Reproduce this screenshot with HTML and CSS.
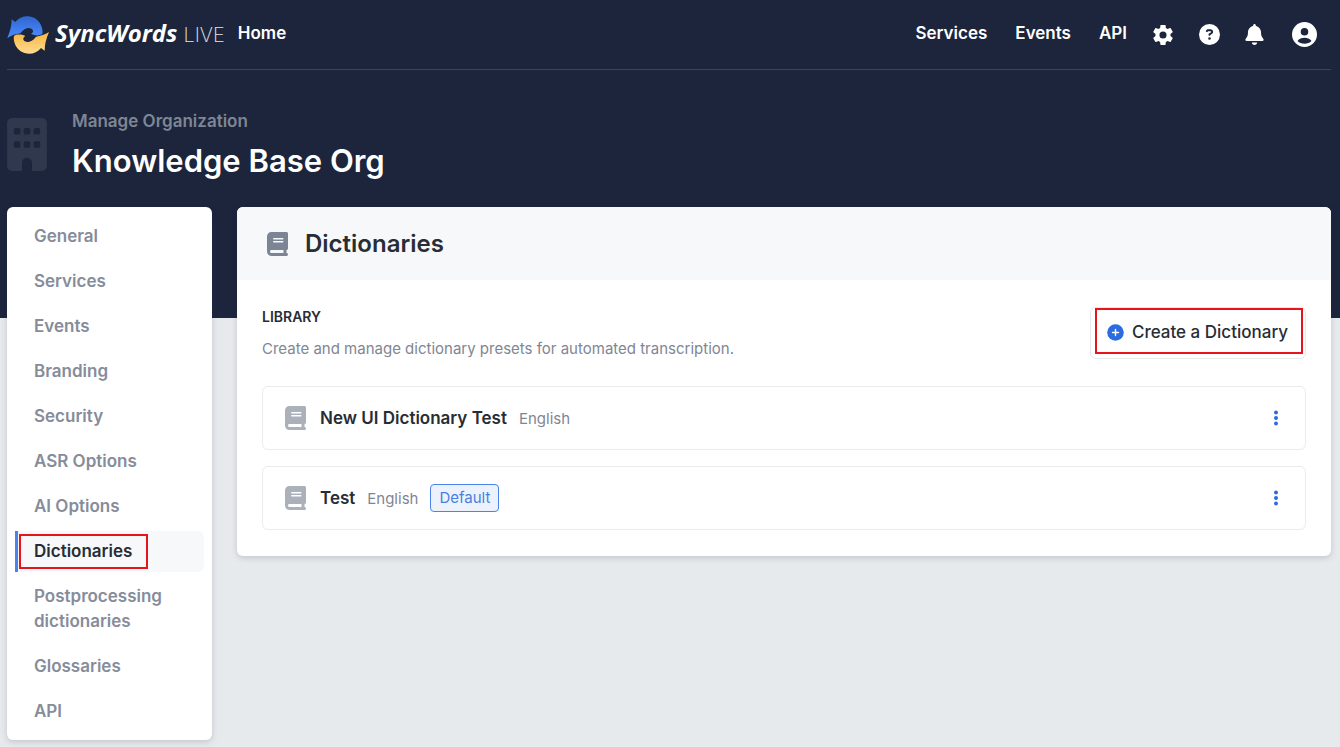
FILE: index.html
```html
<!DOCTYPE html>
<html lang="en">
<head>
<meta charset="utf-8">
<title>Dictionaries - SyncWords Live</title>
<meta name="viewport" content="width=device-width, initial-scale=1">
<link rel="stylesheet" href="styles.css">
</head>
<body>
<svg class="sprite" aria-hidden="true">
  <defs>
    <symbol id="book" viewBox="0 0 448 512"><path d="M96 0C43 0 0 43 0 96V416c0 53 43 96 96 96H384h32c17.7 0 32-14.3 32-32s-14.3-32-32-32V384c17.7 0 32-14.3 32-32V32c0-17.7-14.3-32-32-32H384 96zm0 384H352v64H96c-17.7 0-32-14.3-32-32s14.3-32 32-32zm32-240c0-8.8 7.2-16 16-16H336c8.8 0 16 7.2 16 16s-7.2 16-16 16H144c-8.8 0-16-7.2-16-16zm16 48H336c8.8 0 16 7.2 16 16s-7.2 16-16 16H144c-8.8 0-16-7.2-16-16s7.2-16 16-16z"/></symbol>
    <symbol id="dots" viewBox="0 0 6 16"><circle cx="3" cy="2.5" r="2"/><circle cx="3" cy="8" r="2"/><circle cx="3" cy="13.5" r="2"/></symbol>
  </defs>
</svg>

<div class="hero">
  <header class="topbar">
    <a class="brand" href="#" aria-label="SyncWords Live">
      <svg class="brand-mark" viewBox="11 12 126 120" aria-hidden="true">
        <defs>
          <linearGradient id="blue" x1="0" y1="0" x2="0" y2="1"><stop offset="0" stop-color="#2f66d0"/><stop offset="1" stop-color="#4b8bff"/></linearGradient>
          <linearGradient id="gold" x1="0" y1="1" x2="0" y2="0"><stop offset="0" stop-color="#f6b43e"/><stop offset="1" stop-color="#ffdc92"/></linearGradient>
          <path id="arrow" d="M25 25L36 33C54 9 92 10 109 35C117 47 119 60 117 69C108 75 96 74 83 69C92 63 90 56 84 53C76 48 62 52 51 67C38 69 24 73 12 81C20 62 25 45 25 25Z"/>
        </defs>
        <use href="#arrow" fill="url(#blue)"/>
        <use href="#arrow" fill="url(#gold)" transform="rotate(180 74.500 72)"/>
      </svg>
      <span class="brand-name">SyncWords</span>
      <span class="brand-live">LIVE</span>
    </a>
    <a class="top-link" href="#">Home</a>
    <nav class="top-nav" aria-label="Main">
      <a class="top-link" href="#">Services</a>
      <a class="top-link" href="#">Events</a>
      <a class="top-link" href="#">API</a>
    </nav>
    <div class="top-icons">
      <button class="icon-button" type="button" aria-label="Settings"><svg width="22" height="22" viewBox="1.5 1.5 21 21"><path d="M19.14 12.94c.04-.3.06-.61.06-.94 0-.32-.02-.64-.07-.94l2.03-1.58c.18-.14.23-.41.12-.61l-1.92-3.32c-.12-.22-.37-.29-.59-.22l-2.39.96c-.5-.38-1.03-.7-1.62-.94l-.36-2.54c-.04-.24-.24-.41-.48-.41h-3.84c-.24 0-.43.17-.47.41l-.36 2.54c-.59.24-1.13.57-1.62.94l-2.39-.96c-.22-.08-.47 0-.59.22L2.74 8.87c-.12.21-.08.47.12.61l2.03 1.58c-.05.3-.09.63-.09.94s.02.64.07.94l-2.03 1.58c-.18.14-.23.41-.12.61l1.92 3.32c.12.22.37.29.59.22l2.39-.96c.5.38 1.03.7 1.62.94l.36 2.54c.05.24.24.41.48.41h3.84c.24 0 .44-.17.47-.41l.36-2.54c.59-.24 1.13-.56 1.62-.94l2.39.96c.22.08.47 0 .59-.22l1.92-3.32c.12-.22.07-.47-.12-.61zM12 15.4A3.4 3.4 0 1 1 12 8.6a3.4 3.4 0 0 1 0 6.8z"/></svg></button>
      <button class="icon-button" type="button" aria-label="Help"><svg width="21" height="21" viewBox="0 0 512 512"><path d="M256 512A256 256 0 1 0 256 0a256 256 0 1 0 0 512zM169.8 165.3c7.9-22.3 29.1-37.3 52.8-37.3h58.3c34.9 0 63.1 28.3 63.1 63.1c0 22.6-12.1 43.5-31.7 54.8L280 264.4c-.2 13-10.9 23.6-24 23.6c-13.3 0-24-10.7-24-24V250.5c0-8.6 4.6-16.5 12.1-20.8l44.3-25.4c4.7-2.7 7.6-7.7 7.6-13.1c0-8.4-6.8-15.1-15.1-15.1H222.6c-3.4 0-6.4 2.1-7.5 5.3l-.4 1.2c-4.4 12.5-18.2 19-30.6 14.6s-19-18.2-14.6-30.6l.4-1.2zM224 352a32 32 0 1 1 64 0 32 32 0 1 1 -64 0z"/></svg></button>
      <button class="icon-button" type="button" aria-label="Notifications"><svg width="19" height="21" viewBox="0 0 448 512"><path d="M224 0c-17.7 0-32 14.3-32 32V51.2C119 66 64 130.6 64 208v18.8c0 47-17.3 92.4-48.5 127.6l-7.4 8.3c-8.4 9.4-10.4 22.9-5.3 34.4S19.4 416 32 416H416c12.6 0 24-7.4 29.2-18.9s3.1-25-5.3-34.4l-7.4-8.3C401.3 319.2 384 273.9 384 226.8V208c0-77.4-55-142-128-156.8V32c0-17.7-14.3-32-32-32zm45.3 493.3c12-12 18.7-28.3 18.7-45.3H224 160c0 17 6.7 33.3 18.7 45.3s28.3 18.7 45.3 18.7s33.3-6.7 45.3-18.7z"/></svg></button>
      <button class="icon-button account" type="button" aria-label="Account"><svg width="25" height="25" viewBox="0 0 25 25"><path fill-rule="evenodd" d="M12.500 0a12.500 12.500 0 1 0 0 25a12.500 12.500 0 1 0 0-25zM12.500 6a3.800 3.800 0 1 1 0 7.600a3.800 3.800 0 1 1 0-7.600zM5.500 19C7 16.800 9.800 15.800 12.500 15.800S18 16.800 19.500 19C17.800 20.900 15.300 21.700 12.500 21.700S7.200 20.900 5.500 19z"/></svg></button>
    </div>
  </header>
  <div class="org">
    <svg class="org-icon" viewBox="0 0 384 512" aria-hidden="true"><path fill-rule="evenodd" d="M48 0C21.500 0 0 21.500 0 48V464c0 26.500 21.500 48 48 48h96V432c0-26.500 21.500-48 48-48s48 21.500 48 48v80h96c26.500 0 48-21.500 48-48V48c0-26.500-21.500-48-48-48zM80 96h32q16 0 16 16v32q0 16-16 16H80q-16 0-16-16v-32q0-16 16-16zM176 96h32q16 0 16 16v32q0 16-16 16h-32q-16 0-16-16v-32q0-16 16-16zM272 96h32q16 0 16 16v32q0 16-16 16h-32q-16 0-16-16v-32q0-16 16-16zM80 224h32q16 0 16 16v32q0 16-16 16H80q-16 0-16-16v-32q0-16 16-16zM176 224h32q16 0 16 16v32q0 16-16 16h-32q-16 0-16-16v-32q0-16 16-16zM272 224h32q16 0 16 16v32q0 16-16 16h-32q-16 0-16-16v-32q0-16 16-16z"/></svg>
    <div>
      <p class="org-label">Manage Organization</p>
      <h1 class="org-name">Knowledge Base Org</h1>
    </div>
  </div>
</div>

<div class="page">
  <nav class="sidebar" aria-label="Organization settings">
    <a class="side-link" href="#">General</a>
    <a class="side-link" href="#">Services</a>
    <a class="side-link" href="#">Events</a>
    <a class="side-link" href="#">Branding</a>
    <a class="side-link" href="#">Security</a>
    <a class="side-link" href="#">ASR Options</a>
    <a class="side-link" href="#">AI Options</a>
    <a class="side-link active" href="#" aria-current="page">Dictionaries<span class="callout callout-side"></span></a>
    <a class="side-link" href="#">Postprocessing dictionaries</a>
    <a class="side-link" href="#">Glossaries</a>
    <a class="side-link" href="#">API</a>
  </nav>

  <main class="panel">
    <div class="panel-head">
      <svg class="book" aria-hidden="true"><use href="#book"/></svg>
      <h2 class="panel-title">Dictionaries</h2>
    </div>
    <div class="panel-body">
      <div class="library">
        <div>
          <h3 class="library-title">LIBRARY</h3>
          <p class="library-text">Create and manage dictionary presets for automated transcription.</p>
        </div>
        <button class="create" type="button">
          <svg width="17" height="17" viewBox="0 0 17 17" aria-hidden="true"><circle cx="8.500" cy="8.500" r="8.300" fill="#2c6be0"/><path d="M8.500 5.500v6M5.500 8.500h6" stroke="#fff" stroke-width="1.400" stroke-linecap="round"/></svg>
          Create a Dictionary
          <span class="callout callout-create"></span>
        </button>
      </div>
      <ul class="list">
        <li class="row">
          <svg class="book" aria-hidden="true"><use href="#book"/></svg>
          <span class="row-name">New UI Dictionary Test</span>
          <span class="row-lang">English</span>
          <button class="more" type="button" aria-label="More options"><svg width="6" height="16"><use href="#dots"/></svg></button>
        </li>
        <li class="row">
          <svg class="book" aria-hidden="true"><use href="#book"/></svg>
          <span class="row-name">Test</span>
          <span class="row-lang">English</span>
          <span class="tag">Default</span>
          <button class="more" type="button" aria-label="More options"><svg width="6" height="16"><use href="#dots"/></svg></button>
        </li>
      </ul>
    </div>
  </main>
</div>
</body>
</html>
```
FILE: styles.css
```css
* { box-sizing: border-box; }

body {
  margin: 0;
  background: #e7eaed;
  color: #282d35;
  font-family: Inter, "Liberation Sans", sans-serif;
  font-size: 17px;
}

h1, h2, h3, p, ul { margin: 0; padding: 0; }
a { color: inherit; text-decoration: none; }
button { border: 0; background: none; padding: 0; font: inherit; color: inherit; }
svg { display: block; flex: none; fill: currentColor; }
.sprite { position: absolute; width: 0; height: 0; }

.hero {
  padding: 0 9px 111px 7px;
  background: #1c253c;
  color: #fff;
}

.topbar {
  display: flex;
  align-items: center;
  height: 70px;
  padding-right: 14px;
  border-bottom: 1px solid #3b455b;
}

.brand { display: flex; align-items: center; gap: 6px; margin-right: 13px; }
.brand-mark { width: 42px; height: 40px; }
.brand-name { padding-bottom: 3px; font: italic 700 24px/32px "Open Sans", "Noto Sans", sans-serif; }
.brand-live { font: 200 20px/32px Inter, sans-serif; color: #e2e5ec; }
.top-link { font-weight: 600; line-height: 24px; padding-bottom: 3px; }
.top-nav { display: flex; gap: 28px; margin-left: auto; }
.top-icons { display: flex; align-items: center; gap: 25px; margin-left: 25px; }
.icon-button { display: flex; }
.account { margin-left: 3px; }

.org { display: flex; align-items: center; gap: 25px; padding: 35px 0 23px; }
.org-icon { width: 40px; height: 53px; color: #30384d; }
.org-label { color: #7f8694; font-weight: 600; line-height: 32px; }
.org-name { font-size: 31px; font-weight: 600; line-height: 47px; }

.page {
  display: flex;
  align-items: flex-start;
  gap: 25px;
  margin-top: -111px;
  padding: 0 9px 7px 7px;
}

.sidebar, .panel {
  border-radius: 6px;
  background: #fff;
  box-shadow: 0 2px 6px rgba(30, 40, 60, .18);
}

.sidebar {
  display: flex;
  flex: none;
  flex-direction: column;
  gap: 4px;
  width: 205px;
  padding: 9px 8px 8px;
}

.side-link {
  position: relative;
  padding: 8px 16px;
  border-left: 3px solid transparent;
  border-radius: 0 6px 6px 0;
  color: #868c9a;
  font-weight: 600;
  line-height: 25px;
}
.side-link.active { border-left-color: #4a83ea; background: #f7f8fa; color: #282d35; }

/* Red frames that lie over the highlighted controls */
.callout { position: absolute; border: 2px solid #e8141c; pointer-events: none; }
.callout-side { top: 3px; left: 1px; width: 129px; height: 35px; }
.callout-create { inset: 0 2px 4px 4px; }

.panel { flex: 1; min-width: 0; }
.panel-head {
  display: flex;
  align-items: center;
  gap: 17px;
  padding: 18px 30px;
  border-radius: 6px 6px 0 0;
  background: #f7f8fa;
}
.book { width: 21px; height: 24px; color: #7d8595; }
.panel-title { font-size: 24px; font-weight: 600; line-height: 37px; }
.panel-body { padding: 27px 25px 26px; }

.library { display: flex; align-items: flex-start; justify-content: space-between; }
.library-title { font-size: 14px; font-weight: 600; line-height: 20px; }
.library-text { margin-top: 10px; color: #7f8694; font-size: 15px; line-height: 24px; }
.create {
  position: relative;
  display: flex;
  align-items: center;
  gap: 8px;
  padding: 12px 17px 13px 16px;
  border: 1px solid #e7ebee;
  border-radius: 6px;
  font-weight: 500;
  line-height: 25px;
}

.list { display: grid; gap: 16px; margin-top: 25px; list-style: none; }
.row {
  display: flex;
  align-items: center;
  height: 64px;
  padding: 0 26px 0 22px;
  border: 1px solid #e9ebee;
  border-radius: 6px;
}
.row .book { color: #abb1ba; }
.row-name { margin-left: 14px; font-weight: 600; }
.row-lang { margin-left: 12px; color: #7f8694; font-size: 15px; }
.tag {
  margin-left: 12px;
  padding: 0 8px;
  border: 1px solid #4a83ea;
  border-radius: 4px;
  background: #ebf2fd;
  color: #4a7fe0;
  font-size: 15px;
  line-height: 26px;
}
.more { margin-left: auto; color: #2c6be0; }
```
